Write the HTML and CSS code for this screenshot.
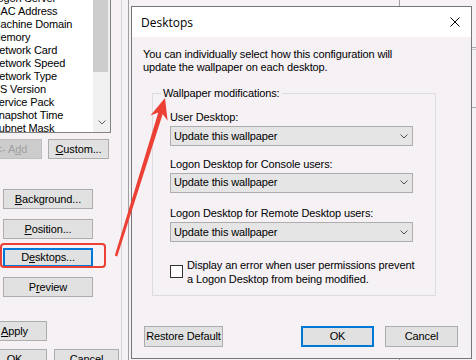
FILE: index.html
```html
<!DOCTYPE html>
<html>
<head>
<meta charset="utf-8">
<link rel="stylesheet" href="styles.css">
</head>
<body>
<div class="desk">
  <div class="bgwin">
    <div class="leftcol">
      <div class="listbox">
        <ul class="items">
          <li>Logon Server</li>
          <li>MAC Address</li>
          <li>Machine Domain</li>
          <li>Memory</li>
          <li>Network Card</li>
          <li>Network Speed</li>
          <li>Network Type</li>
          <li>OS Version</li>
          <li>Service Pack</li>
          <li>Snapshot Time</li>
          <li>Subnet Mask</li>
        </ul>
        <div class="vscroll">
          <div class="thumb"></div>
          <div class="track"></div>
          <div class="sarrow"><svg width="8" height="5" viewBox="0 0 8 5"><path d="M0.5 0.5L4 4L7.5 0.5" fill="none" stroke="#606060" stroke-width="1"/></svg></div>
        </div>
      </div>
      <div class="row-add">
        <button class="btn add">&lt;- A<u>d</u>d</button>
        <button class="btn custom"><u>C</u>ustom...</button>
      </div>
      <div class="btn-stack">
        <button class="btn b-bg"><u>B</u>ackground...</button>
        <button class="btn b-pos"><u>P</u>osition...</button>
        <button class="btn b-desk">D<u>e</u>sktops...</button>
        <button class="btn b-prev">P<u>r</u>eview</button>
      </div>
      <div class="row-apply"><button class="btn small"><u>A</u>pply</button></div>
      <div class="row-ok"><button class="btn small">OK</button><button class="btn small">Cancel</button></div>
    </div>
    <div class="vline vl-light"></div>
    <div class="vline vl-mid"></div>
    <div class="bgrest">
      <div class="rest-gap"></div>
      <div class="rest-vline"></div>
      <div class="rest-right">
        <div class="hl"></div>
        <div class="hl hl2"></div>
        <div class="hl hl3"></div>
      </div>
    </div>
  </div>

  <section class="dialog">
    <div class="titlebar">
      <span class="title">Desktops</span>
      <svg class="close" width="10" height="10" viewBox="0 0 10 10"><path d="M0.5 0.5L9.5 9.5M9.5 0.5L0.5 9.5" stroke="#000" stroke-width="1"/></svg>
    </div>
    <div class="dbody">
      <p class="intro">You can individually select how this configuration will<br>update the wallpaper on each desktop.</p>
      <fieldset class="group">
        <legend>Wallpaper modifications:</legend>
        <div class="fields">
          <div class="field f1">
            <div class="lbl">User Desktop:</div>
            <div class="combo"><span>Update this wallpaper</span><svg width="8" height="5" viewBox="0 0 8 5"><path d="M0.5 0.5L4 4L7.5 0.5" fill="none" stroke="#505050" stroke-width="1"/></svg></div>
          </div>
          <div class="field f2">
            <div class="lbl">Logon Desktop for Console users:</div>
            <div class="combo"><span>Update this wallpaper</span><svg width="8" height="5" viewBox="0 0 8 5"><path d="M0.5 0.5L4 4L7.5 0.5" fill="none" stroke="#505050" stroke-width="1"/></svg></div>
          </div>
          <div class="field f3">
            <div class="lbl">Logon Desktop for Remote Desktop users:</div>
            <div class="combo"><span>Update this wallpaper</span><svg width="8" height="5" viewBox="0 0 8 5"><path d="M0.5 0.5L4 4L7.5 0.5" fill="none" stroke="#505050" stroke-width="1"/></svg></div>
          </div>
          <div class="check">
            <div class="box"></div>
            <div class="ctext">Display an error when user permissions prevent<br>a Logon Desktop from being modified.</div>
          </div>
        </div>
      </fieldset>
      <div class="actions">
        <button class="btn restore">Restore Default</button>
        <button class="btn ok default">OK</button>
        <button class="btn cancel">Cancel</button>
      </div>
    </div>
  </section>

  <svg class="annot" width="476" height="360" viewBox="0 0 476 360">
    <rect x="1" y="244" width="104" height="23" rx="3" ry="3" fill="none" stroke="#ec4035" stroke-width="2"/>
    <polygon points="165,98 167.6,120.8 162.7,114 117.2,256.4 114.8,255.6 158.3,112.6 150.4,115.4" fill="#ec4035"/>
  </svg>
</div>
</body>
</html>
```

FILE: styles.css
```css
* { box-sizing: border-box; }
html, body { margin: 0; padding: 0; }
body {
  width: 476px;
  height: 360px;
  overflow: hidden;
  background: #f5f1f5;
  font-family: "Liberation Sans", Arial, sans-serif;
  font-size: 11px;
  line-height: 13px;
  letter-spacing: -0.12px;
  color: #000;
}
.desk { position: relative; width: 476px; height: 360px; overflow: hidden; }
.bgwin { display: flex; height: 360px; }

.leftcol { flex: 0 0 111px; width: 111px; display: flex; flex-direction: column; }
.listbox {
  display: flex;
  height: 133px;
  background: #fff;
  border-right: 1px solid #828282;
  border-bottom: 1px solid #828282;
}
.items { list-style: none; margin: 0; padding: 0; width: 93px; overflow: hidden; }
.items li { height: 13px; line-height: 13px; white-space: nowrap; margin-left: -8.5px; }
.items li:first-child { margin-top: -8.5px; }
.vscroll { width: 17px; display: flex; flex-direction: column; background: #f0f0f0; }
.thumb { height: 72px; width: 15px; background: #cdcdcd; }
.track { flex: 1; }
.sarrow { height: 17px; display: flex; align-items: center; justify-content: center; padding-bottom: 3px; }

.btn {
  appearance: none;
  -webkit-appearance: none;
  font: inherit;
  letter-spacing: inherit;
  color: #000;
  background: #e1e1e1;
  border: 1px solid #adadad;
  border-radius: 0;
  margin: 0;
  padding: 0;
  height: 20px;
  display: flex;
  align-items: center;
  justify-content: center;
  white-space: nowrap;
  flex-shrink: 0;
}
.row-add { display: flex; gap: 6px; margin: 6px 0 0 -19px; }
.add { width: 61px; color: #a0a0a0; background: #cccccc; border-color: #bfbfbf; }
.custom { width: 61px; }
.btn-stack { display: flex; flex-direction: column; width: 90px; margin: 30px 0 0 3px; }
.btn-stack .btn { width: 90px; }
.b-pos { margin-top: 10px; }
.b-desk { margin-top: 9px; height: 19px; border: 2px solid #0078d7; }
.b-prev { margin-top: 10px; }
.row-apply { margin: 24px 0 0 -18px; display: flex; }
.row-ok { display: flex; gap: 7px; margin: 8px 0 0 -18px; }
.small { width: 65px; }

.vline { flex: 0 0 1px; width: 1px; height: 360px; }
.vl-light { margin-left: 10px; background: #d4d4d4; }
.vl-mid { margin-left: 6px; background: #a0a0a0; }
.bgrest { flex: 1; display: flex; }
.rest-gap { flex: 0 0 270px; }
.rest-vline { flex: 0 0 1px; background: #a0a0a0; }
.rest-right { flex: 1; padding-top: 47px; }
.hl { height: 1px; background: #a8a8a8; }
.hl2 { margin-top: 1px; background: #c8c8c8; }
.hl3 { margin-top: 57px; }

.dialog {
  position: absolute;
  left: 131px;
  top: 6px;
  width: 341px;
  height: 353px;
  border: 1px solid #767676;
  background: #f5f1f5;
  display: flex;
  flex-direction: column;
}
.titlebar {
  height: 30px;
  flex: 0 0 30px;
  background: #fff;
  display: flex;
  align-items: center;
  justify-content: space-between;
  padding: 0 11px 0 9px;
}
.title { font-family: "Open Sans", "Noto Sans", sans-serif; font-size: 12px; letter-spacing: 0; }
.close { display: block; }
.dbody { flex: 1; display: flex; flex-direction: column; }
.intro { margin: 11px 0 0 11px; line-height: 13px; }
.group {
  margin: 12.5px 0 0 20px;
  width: 284px;
  min-width: 0;
  padding: 0;
  border: 1px solid #dcdcdc;
}
.group legend { margin-left: 8px; padding: 0 2px; line-height: 13px; }
.fields { display: flex; flex-direction: column; padding: 11.5px 0 9.5px 17px; }
.lbl { height: 13px; line-height: 13px; margin-bottom: 2px; white-space: nowrap; }
.combo {
  width: 243px;
  height: 20px;
  background: #e5e5e5;
  border: 1px solid #adadad;
  display: flex;
  align-items: center;
  justify-content: space-between;
  padding: 0 4px 0 3px;
}
.combo svg { display: block; }
.f2 { margin-top: 11.5px; }
.f3 { margin-top: 14.5px; }
.check { display: flex; align-items: center; gap: 4px; margin-top: 15.5px; line-height: 14px; }
.box { flex: 0 0 13px; width: 13px; height: 13px; border: 1px solid #333; background: #fff; }
.ctext { white-space: nowrap; }

.actions { display: flex; margin-top: 30px; padding: 0 13px 0 12px; }
.actions .btn { height: 21px; }
.restore { width: 79px; }
.ok { width: 73px; margin-left: auto; }
.cancel { width: 73px; margin-left: 11px; }
.default { border: 2px solid #0078d7; }

.annot { position: absolute; left: 0; top: 0; pointer-events: none; }
```
